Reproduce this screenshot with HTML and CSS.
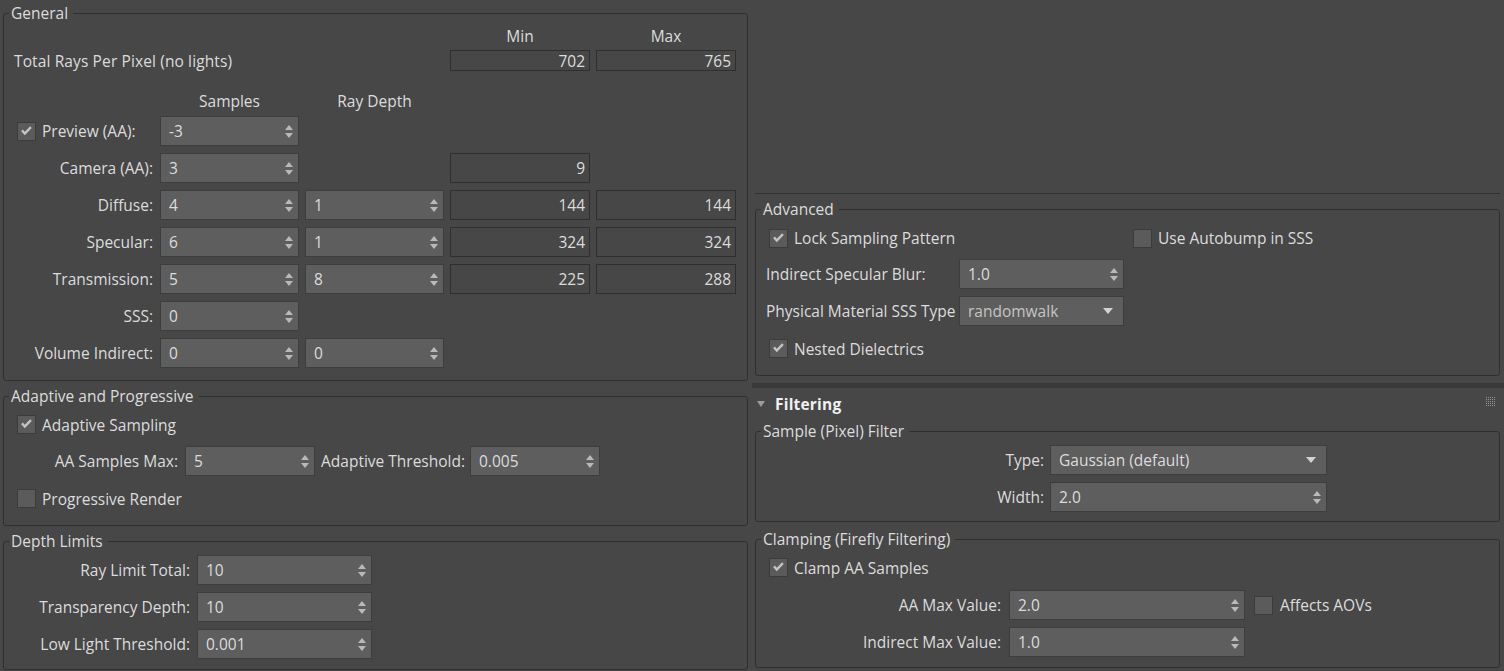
FILE: index.html
```html
<!DOCTYPE html>
<html lang="en">
<head>
    <meta charset="UTF-8">
    <title>Arnold Renderer - Sampling</title>
    <link rel="stylesheet" href="styles.css">
</head>
<body>
<div class="page">
    <!-- Left column -->
    <div class="col col-left">
        <fieldset class="group general">
            <legend>General</legend>
            <div class="gen-row head">
                <span class="c4 center">Min</span>
                <span class="c5 center">Max</span>
            </div>
            <div class="gen-row total">
                <span class="total-label">Total Rays Per Pixel (no lights)</span>
                <div class="readout c4">702</div>
                <div class="readout c5">765</div>
            </div>
            <div class="gen-row head samples-head">
                <span class="c2 center">Samples</span>
                <span class="c3 center">Ray Depth</span>
            </div>
            <div class="gen-row first">
                <label class="check-item preview"><span class="check on"><svg viewBox="0 0 19 19"><path d="M3.5 9.3 L5.4 7.4 L7.6 9.8 L13.6 3.6 L15.4 5.5 L7.6 13.6 Z"/></svg></span>Preview (AA):</label>
                <div class="spin c2"><span>-3</span><i class="arrows"></i></div>
            </div>
            <div class="gen-row">
                <span class="lbl">Camera (AA):</span>
                <div class="spin c2"><span>3</span><i class="arrows"></i></div>
                <div class="readout c4">9</div>
            </div>
            <div class="gen-row">
                <span class="lbl">Diffuse:</span>
                <div class="spin c2"><span>4</span><i class="arrows"></i></div>
                <div class="spin c3"><span>1</span><i class="arrows"></i></div>
                <div class="readout c4">144</div>
                <div class="readout c5">144</div>
            </div>
            <div class="gen-row">
                <span class="lbl">Specular:</span>
                <div class="spin c2"><span>6</span><i class="arrows"></i></div>
                <div class="spin c3"><span>1</span><i class="arrows"></i></div>
                <div class="readout c4">324</div>
                <div class="readout c5">324</div>
            </div>
            <div class="gen-row">
                <span class="lbl">Transmission:</span>
                <div class="spin c2"><span>5</span><i class="arrows"></i></div>
                <div class="spin c3"><span>8</span><i class="arrows"></i></div>
                <div class="readout c4">225</div>
                <div class="readout c5">288</div>
            </div>
            <div class="gen-row">
                <span class="lbl">SSS:</span>
                <div class="spin c2"><span>0</span><i class="arrows"></i></div>
            </div>
            <div class="gen-row">
                <span class="lbl">Volume Indirect:</span>
                <div class="spin c2"><span>0</span><i class="arrows"></i></div>
                <div class="spin c3"><span>0</span><i class="arrows"></i></div>
            </div>
        </fieldset>

        <fieldset class="group adaptive">
            <legend>Adaptive and Progressive</legend>
            <label class="check-item row-check first-check"><span class="check on"><svg viewBox="0 0 19 19"><path d="M3.5 9.3 L5.4 7.4 L7.6 9.8 L13.6 3.6 L15.4 5.5 L7.6 13.6 Z"/></svg></span>Adaptive Sampling</label>
            <div class="adapt-row">
                <span class="lbl">AA Samples Max:</span>
                <div class="spin"><span>5</span><i class="arrows"></i></div>
                <span class="lbl">Adaptive Threshold:</span>
                <div class="spin"><span>0.005</span><i class="arrows"></i></div>
            </div>
            <label class="check-item row-check progressive"><span class="check"></span>Progressive Render</label>
        </fieldset>

        <fieldset class="group depth">
            <legend>Depth Limits</legend>
            <div class="depth-row">
                <span class="lbl">Ray Limit Total:</span>
                <div class="spin"><span>10</span><i class="arrows"></i></div>
            </div>
            <div class="depth-row">
                <span class="lbl">Transparency Depth:</span>
                <div class="spin"><span>10</span><i class="arrows"></i></div>
            </div>
            <div class="depth-row">
                <span class="lbl">Low Light Threshold:</span>
                <div class="spin"><span>0.001</span><i class="arrows"></i></div>
            </div>
        </fieldset>
    </div>

    <!-- Right column -->
    <div class="col col-right">
        <div class="top-space"></div>

        <fieldset class="group advanced">
            <legend>Advanced</legend>
            <div class="adv-checks">
                <label class="check-item"><span class="check on"><svg viewBox="0 0 19 19"><path d="M3.5 9.3 L5.4 7.4 L7.6 9.8 L13.6 3.6 L15.4 5.5 L7.6 13.6 Z"/></svg></span>Lock Sampling Pattern</label>
                <label class="check-item"><span class="check"></span>Use Autobump in SSS</label>
            </div>
            <div class="adv-row blur">
                <span class="lbl-left">Indirect Specular Blur:</span>
                <div class="spin"><span>1.0</span><i class="arrows"></i></div>
            </div>
            <div class="adv-row sss">
                <span class="lbl-left">Physical Material SSS Type</span>
                <div class="drop"><span class="muted">randomwalk</span><i class="caret"></i></div>
            </div>
            <label class="check-item row-check nested"><span class="check on"><svg viewBox="0 0 19 19"><path d="M3.5 9.3 L5.4 7.4 L7.6 9.8 L13.6 3.6 L15.4 5.5 L7.6 13.6 Z"/></svg></span>Nested Dielectrics</label>
        </fieldset>

        <div class="rollout-sep"></div>
        <div class="rollout-head">
            <i class="fold"></i>
            <span class="rollout-title">Filtering</span>
            <svg class="grip" viewBox="0 0 10 10">
                <defs><pattern id="dots" width="2" height="2" patternUnits="userSpaceOnUse"><rect width="1" height="1" fill="#959595"/></pattern></defs>
                <rect width="10" height="10" fill="url(#dots)"/>
            </svg>
        </div>

        <fieldset class="group pixel-filter">
            <legend>Sample (Pixel) Filter</legend>
            <div class="filter-row first">
                <span class="lbl">Type:</span>
                <div class="drop"><span>Gaussian (default)</span><i class="caret"></i></div>
            </div>
            <div class="filter-row">
                <span class="lbl">Width:</span>
                <div class="spin"><span>2.0</span><i class="arrows"></i></div>
            </div>
        </fieldset>

        <fieldset class="group clamping">
            <legend>Clamping (Firefly Filtering)</legend>
            <label class="check-item row-check clamp-check"><span class="check on"><svg viewBox="0 0 19 19"><path d="M3.5 9.3 L5.4 7.4 L7.6 9.8 L13.6 3.6 L15.4 5.5 L7.6 13.6 Z"/></svg></span>Clamp AA Samples</label>
            <div class="clamp-row first">
                <span class="lbl">AA Max Value:</span>
                <div class="spin"><span>2.0</span><i class="arrows"></i></div>
                <label class="check-item aovs"><span class="check"></span>Affects AOVs</label>
            </div>
            <div class="clamp-row">
                <span class="lbl">Indirect Max Value:</span>
                <div class="spin"><span>1.0</span><i class="arrows"></i></div>
            </div>
        </fieldset>
    </div>
</div>
</body>
</html>
```

FILE: styles.css
```css
/* 3ds Max dark theme look */
body {
    margin: 0;
    background: #474747;
    color: #dcdcdc;
    font-family: "Open Sans", "Liberation Sans", sans-serif;
    font-size: 15.5px;
    line-height: 20px;
}

.page {
    display: flex;
    width: 1504px;
    height: 671px;
    overflow: hidden;
}

.col {
    width: 752px;
    padding-left: 3px;
    box-sizing: border-box;
}

/* Group boxes */
.group {
    box-sizing: border-box;
    width: 745px;
    min-width: 0;
    margin: 5px 0 0;
    padding: 0;
    border: 1px solid #2f2f2f;
    border-radius: 3px;
}

.group legend {
    margin-left: 5px;
    padding: 0 5px 0 2px;
    height: 20px;
    line-height: 20px;
}

.lbl {
    text-align: right;
    white-space: nowrap;
}

.center {
    text-align: center;
}

/* Spinner / dropdown / readout fields */
.spin, .drop {
    display: flex;
    align-items: center;
    justify-content: space-between;
    height: 30px;
    box-sizing: border-box;
    padding: 0 5px 0 8px;
    background: #5e5e5e;
    border: 1px solid #3d3d3d;
    white-space: nowrap;
}

.arrows {
    display: flex;
    flex-direction: column;
    gap: 3px;
}

.arrows::before, .arrows::after {
    content: "";
    border-left: 4px solid transparent;
    border-right: 4px solid transparent;
}

.arrows::before {
    border-bottom: 5px solid #b9b9b9;
}

.arrows::after {
    border-top: 5px solid #b9b9b9;
}

.caret {
    margin-right: 5px;
    border-left: 5px solid transparent;
    border-right: 5px solid transparent;
    border-top: 6px solid #d2d2d2;
}

.muted {
    color: #c4c4c4;
}

.readout {
    box-sizing: border-box;
    height: 30px;
    padding-right: 4px;
    border: 1px solid #2f2f2f;
    text-align: right;
    display: flex;
    align-items: center;
    justify-content: flex-end;
}

/* Checkboxes */
.check-item {
    display: flex;
    align-items: center;
    gap: 6px;
    white-space: nowrap;
}

.check {
    width: 19px;
    height: 19px;
    box-sizing: border-box;
    background: #5b5b5b;
    border: 1px solid #3b3b3b;
    flex: none;
}

.check svg {
    display: block;
    width: 17px;
    height: 17px;
}

.check path {
    fill: #c4c4c4;
}

.row-check {
    margin-left: 13px;
    height: 19px;
}

/* General */
.general {
    margin-top: 3px;
    padding-bottom: 12px;
}

.gen-row {
    display: grid;
    grid-template-columns: 150px 139px 139px 140px 140px;
    column-gap: 6px;
    height: 30px;
    align-items: center;
}

.gen-row + .gen-row {
    margin-top: 7px;
}

.gen-row.head {
    height: 20px;
    margin-top: 3px;
}

.gen-row.total {
    height: 21px;
    margin-top: 4px;
}

.gen-row.total .readout {
    height: 21px;
}

.total-label {
    grid-column: 1 / 4;
    padding-left: 10px;
    letter-spacing: 0.12px;
}

.gen-row.samples-head {
    margin-top: 20px;
}

.gen-row.first {
    margin-top: 5px;
}

.gen-row .lbl {
    grid-column: 1;
    padding-right: 1px;
}

.preview {
    grid-column: 1;
    padding-left: 13px;
}

.c2 { grid-column: 2; }
.c3 { grid-column: 3; }
.c4 { grid-column: 4; }
.c5 { grid-column: 5; }

/* Adaptive and Progressive */
.adaptive {
    padding-bottom: 17px;
}

.first-check {
    margin-top: 9px;
}

.adapt-row {
    display: grid;
    grid-template-columns: 175px 130px 143px 130px;
    column-gap: 6px;
    align-items: center;
    margin-top: 12px;
}

.adapt-row .lbl {
    padding-right: 1px;
}

.progressive {
    margin-top: 13px;
}

/* Depth limits */
.depth {
    padding-bottom: 10px;
}

.depth-row {
    display: grid;
    grid-template-columns: 187px 175px;
    column-gap: 6px;
    align-items: center;
    margin-top: 7px;
}

.depth-row:first-of-type {
    margin-top: 4px;
}

.depth-row .lbl {
    padding-right: 1px;
}

/* Right column */
.top-space {
    height: 193px;
    width: 745px;
    border-bottom: 1px solid #303030;
}

.advanced {
    padding-bottom: 17px;
}

.adv-checks {
    display: grid;
    grid-template-columns: 364px auto;
    margin: 9px 0 0 13px;
    height: 19px;
}

.adv-row {
    display: grid;
    grid-template-columns: 203px 165px;
    align-items: center;
    margin-top: 7px;
}

.adv-row.blur {
    margin-top: 12px;
}

.lbl-left {
    padding-left: 10px;
    white-space: nowrap;
}

.nested {
    margin-top: 13px;
}

.rollout-sep {
    margin: 7px 0 0 -3px;
    width: 752px;
    height: 5px;
    background: #393939;
}

.rollout-head {
    display: flex;
    align-items: center;
    margin-left: -3px;
    height: 32px;
    padding: 0 8px 0 5px;
}

.fold {
    border-left: 4.5px solid transparent;
    border-right: 4.5px solid transparent;
    border-top: 6px solid #9c9c9c;
}

.rollout-title {
    margin-left: 10px;
    font-weight: bold;
    color: #f0f0f0;
    letter-spacing: 0.2px;
}

.grip {
    margin-left: auto;
    width: 10px;
    height: 10px;
    margin-bottom: 4px;
}

.pixel-filter {
    margin-top: 1px;
    padding-bottom: 9px;
}

.filter-row {
    display: grid;
    grid-template-columns: 288px 277px;
    column-gap: 6px;
    align-items: center;
    margin-top: 7px;
}

.filter-row.first {
    margin-top: 4px;
}

.clamping {
    margin-top: 7px;
    padding-bottom: 10px;
}

.clamp-check {
    margin-top: 9px;
}

.clamp-row {
    display: grid;
    grid-template-columns: 247px 236px auto;
    column-gap: 6px;
    align-items: center;
    margin-top: 7px;
}

.clamp-row.first {
    margin-top: 13px;
}

.clamp-row .lbl {
    padding-right: 2px;
}

.aovs {
    margin-left: 3px;
    gap: 7px;
}
```
